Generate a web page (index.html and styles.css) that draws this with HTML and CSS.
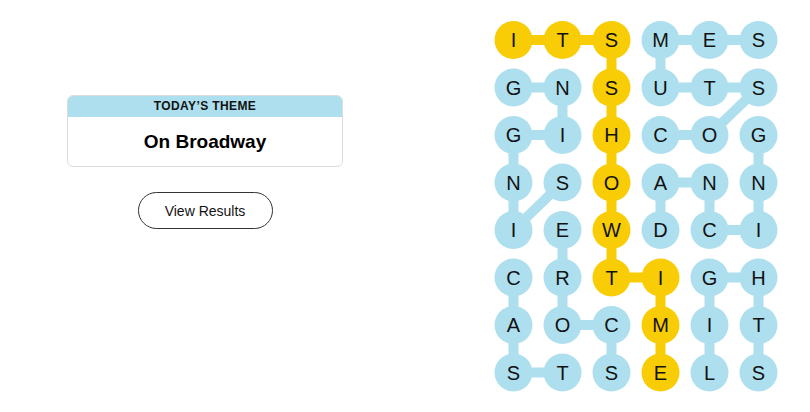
FILE: index.html
```html
<!DOCTYPE html>
<html lang="en">
<head>
    <meta charset="UTF-8">
    <meta name="viewport" content="width=device-width, initial-scale=1.0">
    <title>Strands - On Broadway</title>
    <link rel="stylesheet" href="styles.css">
</head>
<body>
    <div class="side">
        <div class="theme-card">
            <div class="theme-label">Today’s Theme</div>
            <div class="theme-name">On Broadway</div>
        </div>
        <button class="results-button">View Results</button>
    </div>

    <div class="board">
        <svg class="board-svg" width="292" height="385" viewBox="0 0 292 385">
            <!-- found words -->
            <g class="path blue">
                <polyline points="170.5,120 219.5,120 268.5,72.5 170.5,72.5 170.5,25 268.5,25" />
                <polyline points="72.5,167.5 23.5,215 23.5,120 72.5,120 72.5,72.5 23.5,72.5" />
                <polyline points="121.5,357.5 121.5,310 72.5,310 72.5,215" />
                <polyline points="23.5,262.5 23.5,357.5 72.5,357.5" />
                <polyline points="170.5,215 170.5,167.5 219.5,167.5 219.5,215 268.5,215 268.5,120" />
                <polyline points="219.5,357.5 219.5,262.5 268.5,262.5 268.5,357.5" />
            </g>
            <!-- spangram -->
            <g class="path yellow">
                <polyline points="23.5,25 121.5,25 121.5,262.5 170.5,262.5 170.5,357.5" />
            </g>

            <g class="dots">
                <circle class="dot gold" cx="23.5" cy="25" r="19" />
                <circle class="dot gold" cx="72.5" cy="25" r="19" />
                <circle class="dot gold" cx="121.5" cy="25" r="19" />
                <circle class="dot" cx="170.5" cy="25" r="19" />
                <circle class="dot" cx="219.5" cy="25" r="19" />
                <circle class="dot" cx="268.5" cy="25" r="19" />

                <circle class="dot" cx="23.5" cy="72.5" r="19" />
                <circle class="dot" cx="72.5" cy="72.5" r="19" />
                <circle class="dot gold" cx="121.5" cy="72.5" r="19" />
                <circle class="dot" cx="170.5" cy="72.5" r="19" />
                <circle class="dot" cx="219.5" cy="72.5" r="19" />
                <circle class="dot" cx="268.5" cy="72.5" r="19" />

                <circle class="dot" cx="23.5" cy="120" r="19" />
                <circle class="dot" cx="72.5" cy="120" r="19" />
                <circle class="dot gold" cx="121.5" cy="120" r="19" />
                <circle class="dot" cx="170.5" cy="120" r="19" />
                <circle class="dot" cx="219.5" cy="120" r="19" />
                <circle class="dot" cx="268.5" cy="120" r="19" />

                <circle class="dot" cx="23.5" cy="167.5" r="19" />
                <circle class="dot" cx="72.5" cy="167.5" r="19" />
                <circle class="dot gold" cx="121.5" cy="167.5" r="19" />
                <circle class="dot" cx="170.5" cy="167.5" r="19" />
                <circle class="dot" cx="219.5" cy="167.5" r="19" />
                <circle class="dot" cx="268.5" cy="167.5" r="19" />

                <circle class="dot" cx="23.5" cy="215" r="19" />
                <circle class="dot" cx="72.5" cy="215" r="19" />
                <circle class="dot gold" cx="121.5" cy="215" r="19" />
                <circle class="dot" cx="170.5" cy="215" r="19" />
                <circle class="dot" cx="219.5" cy="215" r="19" />
                <circle class="dot" cx="268.5" cy="215" r="19" />

                <circle class="dot" cx="23.5" cy="262.5" r="19" />
                <circle class="dot" cx="72.5" cy="262.5" r="19" />
                <circle class="dot gold" cx="121.5" cy="262.5" r="19" />
                <circle class="dot gold" cx="170.5" cy="262.5" r="19" />
                <circle class="dot" cx="219.5" cy="262.5" r="19" />
                <circle class="dot" cx="268.5" cy="262.5" r="19" />

                <circle class="dot" cx="23.5" cy="310" r="19" />
                <circle class="dot" cx="72.5" cy="310" r="19" />
                <circle class="dot" cx="121.5" cy="310" r="19" />
                <circle class="dot gold" cx="170.5" cy="310" r="19" />
                <circle class="dot" cx="219.5" cy="310" r="19" />
                <circle class="dot" cx="268.5" cy="310" r="19" />

                <circle class="dot" cx="23.5" cy="357.5" r="19" />
                <circle class="dot" cx="72.5" cy="357.5" r="19" />
                <circle class="dot" cx="121.5" cy="357.5" r="19" />
                <circle class="dot gold" cx="170.5" cy="357.5" r="19" />
                <circle class="dot" cx="219.5" cy="357.5" r="19" />
                <circle class="dot" cx="268.5" cy="357.5" r="19" />
            </g>

            <g class="letters">
                <text x="23.5" y="32">I</text>
                <text x="72.5" y="32">T</text>
                <text x="121.5" y="32">S</text>
                <text x="170.5" y="32">M</text>
                <text x="219.5" y="32">E</text>
                <text x="268.5" y="32">S</text>

                <text x="23.5" y="79.5">G</text>
                <text x="72.5" y="79.5">N</text>
                <text x="121.5" y="79.5">S</text>
                <text x="170.5" y="79.5">U</text>
                <text x="219.5" y="79.5">T</text>
                <text x="268.5" y="79.5">S</text>

                <text x="23.5" y="127">G</text>
                <text x="72.5" y="127">I</text>
                <text x="121.5" y="127">H</text>
                <text x="170.5" y="127">C</text>
                <text x="219.5" y="127">O</text>
                <text x="268.5" y="127">G</text>

                <text x="23.5" y="174.5">N</text>
                <text x="72.5" y="174.5">S</text>
                <text x="121.5" y="174.5">O</text>
                <text x="170.5" y="174.5">A</text>
                <text x="219.5" y="174.5">N</text>
                <text x="268.5" y="174.5">N</text>

                <text x="23.5" y="222">I</text>
                <text x="72.5" y="222">E</text>
                <text x="121.5" y="222">W</text>
                <text x="170.5" y="222">D</text>
                <text x="219.5" y="222">C</text>
                <text x="268.5" y="222">I</text>

                <text x="23.5" y="269.5">C</text>
                <text x="72.5" y="269.5">R</text>
                <text x="121.5" y="269.5">T</text>
                <text x="170.5" y="269.5">I</text>
                <text x="219.5" y="269.5">G</text>
                <text x="268.5" y="269.5">H</text>

                <text x="23.5" y="317">A</text>
                <text x="72.5" y="317">O</text>
                <text x="121.5" y="317">C</text>
                <text x="170.5" y="317">M</text>
                <text x="219.5" y="317">I</text>
                <text x="268.5" y="317">T</text>

                <text x="23.5" y="364.5">S</text>
                <text x="72.5" y="364.5">T</text>
                <text x="121.5" y="364.5">S</text>
                <text x="170.5" y="364.5">E</text>
                <text x="219.5" y="364.5">L</text>
                <text x="268.5" y="364.5">S</text>
            </g>
        </svg>
    </div>
</body>
</html>
```

FILE: styles.css
```css
body {
    display: flex;
    margin: 0;
    height: 100vh;
    background-color: #fff;
    color: #000;
    font-family: "Liberation Sans", Arial, sans-serif;
}
.side {
    width: 410px;
    display: flex;
    flex-direction: column;
    align-items: center;
    padding-top: 95px;
    box-sizing: border-box;
}
.theme-card {
    width: 276px;
    border: 1px solid #dcdcdc;
    border-radius: 6px;
    overflow: hidden;
    box-sizing: border-box;
}
.theme-label {
    height: 21px;
    line-height: 21px;
    background-color: #aedfee;
    text-align: center;
    text-transform: uppercase;
    font-size: 12px;
    font-weight: bold;
    letter-spacing: 0.4px;
    color: #121212;
}
.theme-name {
    height: 49px;
    display: flex;
    justify-content: center;
    align-items: center;
    font-size: 19px;
    font-weight: bold;
    color: #000;
}
.results-button {
    margin-top: 25px;
    width: 135px;
    height: 37px;
    border: 1px solid #333;
    border-radius: 20px;
    background-color: #fff;
    font-family: "Liberation Sans", Arial, sans-serif;
    font-size: 14px;
    color: #121212;
    padding: 0;
}
.board {
    padding-top: 15px;
    padding-left: 80px;
}
.board-svg {
    display: block;
}
.path polyline {
    fill: none;
    stroke-width: 10;
    stroke-linejoin: round;
}
.path.blue polyline { stroke: #aedfee; }
.path.yellow polyline { stroke: #f8cd05; }
.dot { fill: #aedfee; }
.dot.gold { fill: #f8cd05; }
.letters text {
    font-family: "Liberation Sans", Arial, sans-serif;
    font-size: 20px;
    text-anchor: middle;
    fill: #121212;
}
```
